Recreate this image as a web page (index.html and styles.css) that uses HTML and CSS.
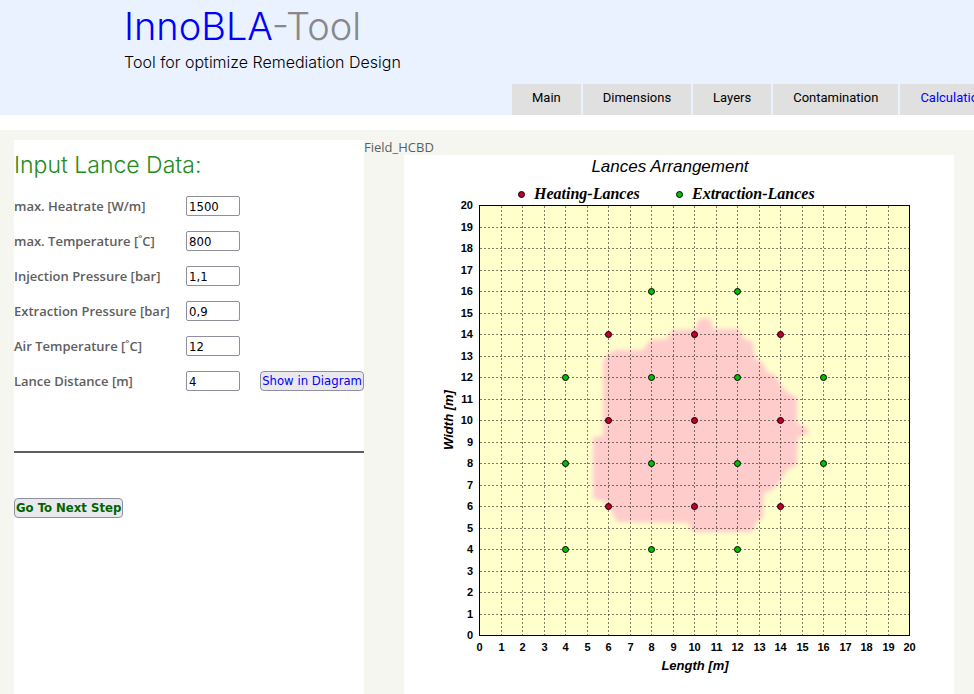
FILE: index.html
```html
<!DOCTYPE html>
<html lang="en">
<head>
  <meta charset="UTF-8" />
  <title>InnoBLA-Tool</title>
  <link rel="stylesheet" href="styles.css">
</head>
<body>

  <!-- Header -->
  <header class="header">
    <h1 class="logo">InnoBLA<span>-Tool</span></h1>
    <p class="slogan">Tool for optimize Remediation Design</p>
    <nav class="menu">
      <a href="#main">Main</a>
      <a href="#dimensions">Dimensions</a>
      <a href="#layers">Layers</a>
      <a href="#contamination">Contamination</a>
      <a href="#calculation" class="active">Calculation</a>
    </nav>
  </header>

  <!-- Content -->
  <div class="content">
    <form class="sidebar">
      <h2>Input Lance Data:</h2>

      <div class="fields">
        <label for="heatrate">max. Heatrate [W/m]</label>
        <input type="text" id="heatrate" value="1500">

        <label for="temperature">max. Temperature [˚C]</label>
        <input type="text" id="temperature" value="800">

        <label for="injection">Injection Pressure [bar]</label>
        <input type="text" id="injection" value="1,1">

        <label for="extraction">Extraction Pressure [bar]</label>
        <input type="text" id="extraction" value="0,9">

        <label for="air">Air Temperature [˚C]</label>
        <input type="text" id="air" value="12">

        <label for="distance">Lance Distance [m]</label>
        <input type="text" id="distance" value="4">
        <button type="button" class="btn show-btn">Show in Diagram</button>
      </div>

      <hr>

      <button type="button" class="btn next-btn">Go To Next Step</button>
    </form>

    <div class="main">
      <div class="field-name">Field_HCBD</div>
      <div class="chart">
        <svg width="550" height="539" viewBox="0 0 550 539">
          <defs>
            <filter id="soft" x="-5%" y="-5%" width="110%" height="110%">
              <feGaussianBlur stdDeviation="2" />
            </filter>
          </defs>

          <text class="chart-title" x="266" y="17">Lances Arrangement</text>

          <circle class="heating" cx="117.5" cy="39.5" r="3" />
          <text class="legend" x="130" y="44">Heating-Lances</text>
          <circle class="extraction" cx="275.5" cy="39.5" r="3" />
          <text class="legend" x="288" y="44">Extraction-Lances</text>

          <rect class="plot" x="75" y="50" width="431" height="431" />
          <path class="zone" filter="url(#soft)" d="M199 208 L202 200 L211 195 L239 195 L246 185 L263 184 L268 175 L291 174 L295 165 L301 162 L307 165 L309 174 L336 174 L339 183 L349 187 L351 203 L359 208 L363 217 L371 220 L376 228 L384 238 L393 242 L393 268 L404 273 L404 279 L394 282 L393 310 L383 315 L376 327 L368 335 L360 338 L359 363 L353 367 L348 377 L288 377 L284 368 L213 367 L206 354 L201 347 L189 343 L189 282 L199 281 Z" />
          <g id="grid"></g>
          <rect class="frame" x="75.5" y="50.5" width="430" height="430" />
          <g id="lances"></g>
          <g id="ticks"></g>

          <text class="axis" x="291" y="515">Length [m]</text>
          <text class="axis" transform="translate(49 265) rotate(-90)">Width [m]</text>
        </svg>
      </div>
    </div>
  </div>

  <script>
    const left = 75;
    const bottom = 480;
    const step = 21.5;
    const size = 20;

    const heating = [
      [6, 14], [10, 14], [14, 14],
      [6, 10], [10, 10], [14, 10],
      [6, 6], [10, 6], [14, 6]
    ];
    const extraction = [
      [8, 16], [12, 16],
      [4, 12], [8, 12], [12, 12], [16, 12],
      [4, 8], [8, 8], [12, 8], [16, 8],
      [4, 4], [8, 4], [12, 4]
    ];

    let grid = "";
    let ticks = "";

    for (let i = 0; i <= size; i++) {
      const x = Math.round(left + i * step) + 0.5;
      const y = Math.round(bottom - i * step) + 0.5;

      if (i > 0 && i < size) {
        grid += `<line x1="${x}" y1="51" x2="${x}" y2="480" />`;
        grid += `<line x1="76" y1="${y}" x2="505" y2="${y}" />`;
      }

      ticks += `<text class="tick" x="${x}" y="496">${i}</text>`;
      ticks += `<text class="tick tick-y" x="69" y="${y + 3.5}">${i}</text>`;
    }

    function drawLances(points, type) {
      return points.map(([px, py]) => {
        const cx = Math.floor(left + px * step) + 0.5;
        const cy = Math.floor(bottom - py * step) + 0.5;
        return `<circle class="${type}" cx="${cx}" cy="${cy}" r="3" />`;
      }).join("");
    }

    document.getElementById("grid").innerHTML = grid;
    document.getElementById("ticks").innerHTML = ticks;
    document.getElementById("lances").innerHTML =
      drawLances(heating, "heating") + drawLances(extraction, "extraction");
  </script>
</body>
</html>
```
FILE: styles.css
```css
body {
  margin: 0;
  padding: 0;
  min-height: 100vh;
  display: flex;
  flex-direction: column;
  background: white;
  color: #5e5e5e;
  font-family: "Open Sans", "Noto Sans", sans-serif;
  font-size: 13px;
}

.header {
  background: #eaf2ff;
  padding-top: 4px;
  margin-bottom: 15px;
  overflow: hidden;
}

.logo {
  margin: 0 0 0 124px;
  font-family: Inter, sans-serif;
  font-size: 38px;
  font-weight: 300;
  line-height: 44px;
  color: #0000ff;
}

.logo span {
  color: #888888;
}

.slogan {
  margin: 4px 0 12px 124px;
  font-family: Inter, sans-serif;
  font-size: 16px;
  font-weight: 300;
  line-height: 20px;
  color: black;
}

.menu {
  display: flex;
  gap: 2px;
  margin-left: 512px;
}

.menu a {
  flex: none;
  padding: 0 20px 4px;
  background: #e0e0e0;
  color: black;
  font-family: Roboto, sans-serif;
  line-height: 27px;
  text-decoration: none;
}

.menu a.active {
  color: #0000ff;
}

.content {
  flex: 1;
  display: flex;
  padding: 10px 20px 0 14px;
  background: #f5f6f0;
}

.sidebar {
  flex: none;
  width: 350px;
  background: white;
}

.sidebar h2 {
  margin: 10px 0 16px;
  font-family: Inter, sans-serif;
  font-size: 23px;
  font-weight: 300;
  line-height: 30px;
  color: #228b22;
}

.fields {
  display: grid;
  grid-template-columns: 172px 54px 1fr;
  row-gap: 15px;
  align-items: center;
}

.fields label {
  grid-column: 1;
  font-weight: 600;
  line-height: 20px;
}

.fields input {
  box-sizing: border-box;
  width: 100%;
  height: 20px;
  padding: 1px 2px;
  border: 1px solid #8f8f9d;
  border-radius: 2px;
  background: white;
  color: black;
  font-family: "DejaVu Sans Condensed", sans-serif;
  font-size: 13px;
}

.btn {
  box-sizing: border-box;
  height: 20px;
  padding: 0 1px;
  border: 1px solid #8f8f9d;
  border-radius: 4px;
  background: #e9e9ed;
  font-family: "DejaVu Sans Condensed", sans-serif;
  font-size: 13px;
  line-height: 18px;
  white-space: nowrap;
  cursor: pointer;
}

.show-btn {
  justify-self: end;
  color: #0000ff;
}

.next-btn {
  color: #006400;
  font-weight: bold;
}

hr {
  height: 2px;
  margin: 60px 0 45px;
  border: none;
  background: #5e5e5e;
}

.main {
  flex: 1;
  display: flex;
  flex-direction: column;
}

.field-name {
  line-height: 15px;
}

.chart {
  flex: 1;
  margin-left: 40px;
  background: white;
}

.chart svg {
  display: block;
}

.chart text {
  fill: black;
  font-family: "Liberation Sans", Arial, sans-serif;
}

.chart .chart-title {
  font-size: 17px;
  font-style: italic;
  text-anchor: middle;
}

.chart .legend {
  font-family: "Liberation Serif", "Times New Roman", serif;
  font-size: 16px;
  font-weight: bold;
  font-style: italic;
}

.chart .axis {
  font-size: 13px;
  font-weight: bold;
  font-style: italic;
  text-anchor: middle;
}

.chart .tick {
  font-size: 11px;
  font-weight: bold;
  text-anchor: middle;
}

.chart .tick-y {
  text-anchor: end;
}

.plot {
  fill: #ffffcc;
}

.frame {
  fill: none;
  stroke: black;
}

.zone {
  fill: #ffcccc;
}

#grid line {
  stroke: black;
  stroke-opacity: 0.5;
  stroke-dasharray: 2 2;
}

.heating {
  fill: #c00030;
  stroke: black;
}

.extraction {
  fill: #00c000;
  stroke: black;
}
```
